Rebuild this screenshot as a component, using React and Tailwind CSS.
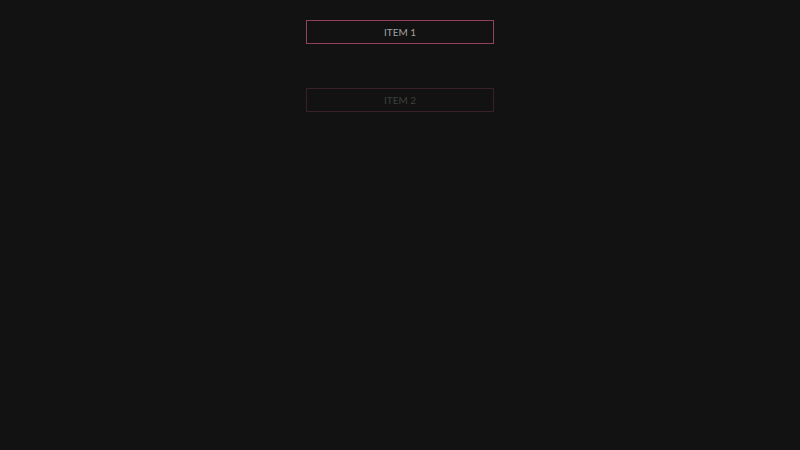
import React from 'react';

const Item = ({ label, dim }) => (
  <div
    className={`w-[188px] h-6 border border-[#94405e] flex items-center justify-center text-[10px] text-[#a0a0a0] ${dim ? 'opacity-30' : ''}`}
  >
    {label}
  </div>
);

const App = () => {
  return (
    <div
      className="w-full h-[450px] bg-[#121212] flex flex-col items-center pt-5 gap-11"
      style={{ fontFamily: 'Lato, "Noto Sans", sans-serif' }}
    >
      <Item label="ITEM 1" />
      <Item label="ITEM 2" dim />
    </div>
  );
};

export default App;
